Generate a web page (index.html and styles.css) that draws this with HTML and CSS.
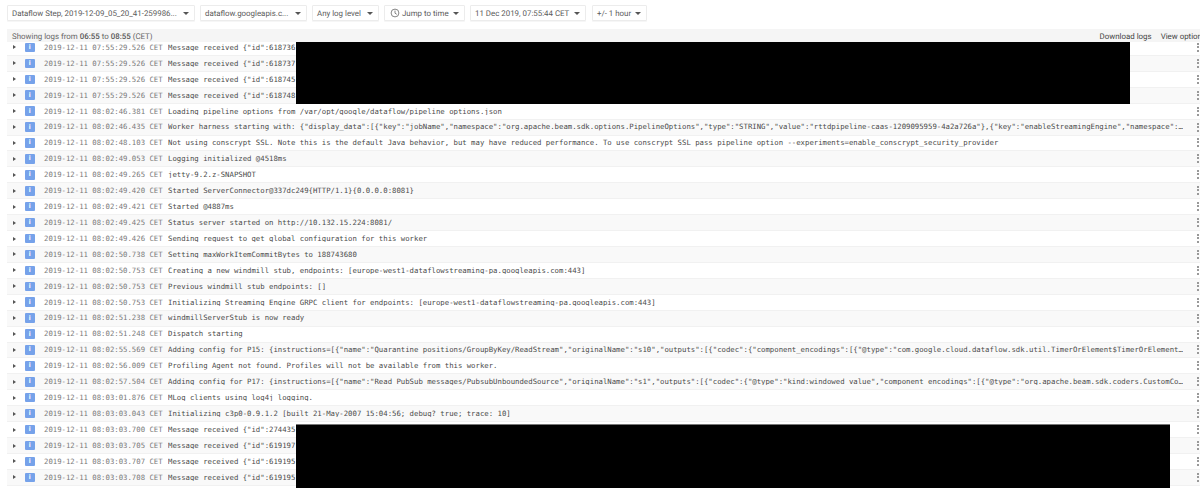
FILE: index.html
```html
<!DOCTYPE html>
<html lang="en">
<head>
<meta charset="utf-8">
<title>Dataflow logs</title>
<link rel="stylesheet" href="styles.css">
</head>
<body>
<div class="page">
  <div class="toolbar">
    <button class="drop w1"><span>Dataflow Step, 2019-12-09_05_20_41-259986...</span><i class="caret"></i></button>
    <button class="drop w2"><span>dataflow.googleapis.c...</span><i class="caret"></i></button>
    <button class="drop w3"><span>Any log level</span><i class="caret"></i></button>
    <button class="drop w4"><svg class="clock" viewBox="0 0 10 10"><circle cx="5" cy="5" r="3.9"/><path d="M5 2.6V5.2L6.8 6.3"/></svg><span>Jump to time</span><i class="caret"></i></button>
    <button class="drop w5"><span>11 Dec 2019, 07:55:44 CET</span><i class="caret"></i></button>
    <button class="drop w6"><span>+/- 1 hour</span><i class="caret"></i></button>
  </div>
  <div class="status">
    <span>Showing logs from <b>06:55</b> to <b>08:55</b> (CET)</span>
    <span class="actions"><span>Download logs</span><span>View options</span></span>
  </div>
  <div class="rows">
    <div class="row"><i class="arrow"></i><span class="badge">i</span><span class="ts">2019-12-11 07:55:29.526 CET</span><span class="msg">Message received {"id":618736</span><i class="kebab"></i></div>
    <div class="row"><i class="arrow"></i><span class="badge">i</span><span class="ts">2019-12-11 07:55:29.526 CET</span><span class="msg">Message received {"id":618737</span><i class="kebab"></i></div>
    <div class="row"><i class="arrow"></i><span class="badge">i</span><span class="ts">2019-12-11 07:55:29.526 CET</span><span class="msg">Message received {"id":618745</span><i class="kebab"></i></div>
    <div class="row"><i class="arrow"></i><span class="badge">i</span><span class="ts">2019-12-11 07:55:29.526 CET</span><span class="msg">Message received {"id":618748</span><i class="kebab"></i></div>
    <div class="row"><i class="arrow"></i><span class="badge">i</span><span class="ts">2019-12-11 08:02:46.381 CET</span><span class="msg">Loading pipeline options from /var/opt/google/dataflow/pipeline_options.json</span><i class="kebab"></i></div>
    <div class="row"><i class="arrow"></i><span class="badge">i</span><span class="ts">2019-12-11 08:02:46.435 CET</span><span class="msg">Worker harness starting with: {"display_data":[{"key":"jobName","namespace":"org.apache.beam.sdk.options.PipelineOptions","type":"STRING","value":"rttdpipeline-caas-1209095959-4a2a726a"},{"key":"enableStreamingEngine","namespace":"org.apache.beam.sdk</span><i class="kebab"></i></div>
    <div class="row"><i class="arrow"></i><span class="badge">i</span><span class="ts">2019-12-11 08:02:48.103 CET</span><span class="msg">Not using conscrypt SSL. Note this is the default Java behavior, but may have reduced performance. To use conscrypt SSL pass pipeline option --experiments=enable_conscrypt_security_provider</span><i class="kebab"></i></div>
    <div class="row"><i class="arrow"></i><span class="badge">i</span><span class="ts">2019-12-11 08:02:49.053 CET</span><span class="msg">Logging initialized @4518ms</span><i class="kebab"></i></div>
    <div class="row"><i class="arrow"></i><span class="badge">i</span><span class="ts">2019-12-11 08:02:49.265 CET</span><span class="msg">jetty-9.2.z-SNAPSHOT</span><i class="kebab"></i></div>
    <div class="row"><i class="arrow"></i><span class="badge">i</span><span class="ts">2019-12-11 08:02:49.420 CET</span><span class="msg">Started ServerConnector@337dc249{HTTP/1.1}{0.0.0.0:8081}</span><i class="kebab"></i></div>
    <div class="row"><i class="arrow"></i><span class="badge">i</span><span class="ts">2019-12-11 08:02:49.421 CET</span><span class="msg">Started @4887ms</span><i class="kebab"></i></div>
    <div class="row"><i class="arrow"></i><span class="badge">i</span><span class="ts">2019-12-11 08:02:49.425 CET</span><span class="msg">Status server started on http://10.132.15.224:8081/</span><i class="kebab"></i></div>
    <div class="row"><i class="arrow"></i><span class="badge">i</span><span class="ts">2019-12-11 08:02:49.426 CET</span><span class="msg">Sending request to get global configuration for this worker</span><i class="kebab"></i></div>
    <div class="row"><i class="arrow"></i><span class="badge">i</span><span class="ts">2019-12-11 08:02:50.738 CET</span><span class="msg">Setting maxWorkItemCommitBytes to 188743680</span><i class="kebab"></i></div>
    <div class="row"><i class="arrow"></i><span class="badge">i</span><span class="ts">2019-12-11 08:02:50.753 CET</span><span class="msg">Creating a new windmill stub, endpoints: [europe-west1-dataflowstreaming-pa.googleapis.com:443]</span><i class="kebab"></i></div>
    <div class="row"><i class="arrow"></i><span class="badge">i</span><span class="ts">2019-12-11 08:02:50.753 CET</span><span class="msg">Previous windmill stub endpoints: []</span><i class="kebab"></i></div>
    <div class="row"><i class="arrow"></i><span class="badge">i</span><span class="ts">2019-12-11 08:02:50.753 CET</span><span class="msg">Initializing Streaming Engine GRPC client for endpoints: [europe-west1-dataflowstreaming-pa.googleapis.com:443]</span><i class="kebab"></i></div>
    <div class="row"><i class="arrow"></i><span class="badge">i</span><span class="ts">2019-12-11 08:02:51.238 CET</span><span class="msg">windmillServerStub is now ready</span><i class="kebab"></i></div>
    <div class="row"><i class="arrow"></i><span class="badge">i</span><span class="ts">2019-12-11 08:02:51.248 CET</span><span class="msg">Dispatch starting</span><i class="kebab"></i></div>
    <div class="row"><i class="arrow"></i><span class="badge">i</span><span class="ts">2019-12-11 08:02:55.569 CET</span><span class="msg">Adding config for P15: {instructions=[{"name":"Quarantine positions/GroupByKey/ReadStream","originalName":"s10","outputs":[{"codec":{"component_encodings":[{"@type":"com.google.cloud.dataflow.sdk.util.TimerOrElement$TimerOrElementCoder","component</span><i class="kebab"></i></div>
    <div class="row"><i class="arrow"></i><span class="badge">i</span><span class="ts">2019-12-11 08:02:56.009 CET</span><span class="msg">Profiling Agent not found. Profiles will not be available from this worker.</span><i class="kebab"></i></div>
    <div class="row"><i class="arrow"></i><span class="badge">i</span><span class="ts">2019-12-11 08:02:57.504 CET</span><span class="msg">Adding config for P17: {instructions=[{"name":"Read PubSub messages/PubsubUnboundedSource","originalName":"s1","outputs":[{"codec":{"@type":"kind:windowed_value","component_encodings":[{"@type":"org.apache.beam.sdk.coders.CustomCoder","component</span><i class="kebab"></i></div>
    <div class="row"><i class="arrow"></i><span class="badge">i</span><span class="ts">2019-12-11 08:03:01.876 CET</span><span class="msg">MLog clients using log4j logging.</span><i class="kebab"></i></div>
    <div class="row"><i class="arrow"></i><span class="badge">i</span><span class="ts">2019-12-11 08:03:03.043 CET</span><span class="msg">Initializing c3p0-0.9.1.2 [built 21-May-2007 15:04:56; debug? true; trace: 10]</span><i class="kebab"></i></div>
    <div class="row"><i class="arrow"></i><span class="badge">i</span><span class="ts">2019-12-11 08:03:03.700 CET</span><span class="msg">Message received {"id":274435</span><i class="kebab"></i></div>
    <div class="row"><i class="arrow"></i><span class="badge">i</span><span class="ts">2019-12-11 08:03:03.705 CET</span><span class="msg">Message received {"id":619197</span><i class="kebab"></i></div>
    <div class="row"><i class="arrow"></i><span class="badge">i</span><span class="ts">2019-12-11 08:03:03.707 CET</span><span class="msg">Message received {"id":619195</span><i class="kebab"></i></div>
    <div class="row"><i class="arrow"></i><span class="badge">i</span><span class="ts">2019-12-11 08:03:03.708 CET</span><span class="msg">Message received {"id":619195</span><i class="kebab"></i></div>
  </div>
  <div class="redact redact-top"></div>
  <div class="redact redact-bottom"></div>
</div>
</body>
</html>
```
FILE: styles.css
```css
* { box-sizing: border-box; }
html, body { margin: 0; padding: 0; background: #fff; }
.page { position: relative; width: 1200px; height: 488px; overflow: hidden; font-family: Roboto, "Liberation Sans", sans-serif; text-rendering: geometricPrecision; }

.toolbar { display: flex; gap: 5px; height: 29px; padding: 5px 0 0 7px; align-items: flex-start; }
.drop { display: flex; align-items: center; height: 16px; margin: 0; padding: 0 5px 0 4px; border: 1px solid #ececec; border-radius: 1px; background: #fff; color: #5a5a5a; font: 400 7.9px Roboto, sans-serif; text-rendering: geometricPrecision; white-space: nowrap; box-shadow: 0 1px 0 #f6f6f6; }
.w1 { width: 188px; }
.w2 { width: 107px; }
.w3 { width: 67px; }
.w4 { width: 81px; }
.w5 { width: 116px; margin-right: 1px; }
.w6 { width: 55px; }
.caret { flex: none; width: 0; height: 0; margin-left: auto; border-left: 3px solid transparent; border-right: 3px solid transparent; border-top: 3px solid #555; }
.clock { flex: none; width: 10px; height: 10px; margin: 0 2px 0 1px; fill: none; stroke: #666; stroke-width: .8; }

.status { position: relative; z-index: 1; display: flex; justify-content: space-between; align-items: center; height: 13px; margin: 0 0 -2px 7px; padding: 2px 0 0 5px; background: #f5f5f5; color: #666; font-size: 7.9px; white-space: nowrap; }
.status b { font-weight: 500; color: #555; }
.actions { display: flex; gap: 9px; margin-right: -6px; color: #444; font-weight: 400; }

.row { display: flex; align-items: center; height: 15.93px; margin-left: 7px; padding-left: 6px; border-bottom: 1px solid #f1f1f1; }
.row:nth-child(even) { background: #f9f9f9; }
.arrow { flex: none; width: 0; height: 0; border-top: 2.5px solid transparent; border-bottom: 2.5px solid transparent; border-left: 3px solid #555; }
.badge { flex: none; display: flex; align-items: center; justify-content: center; width: 9.5px; height: 9.5px; margin-left: 9px; border-radius: 1px; background: #76a2ea; color: #fff; font: 700 7px "Liberation Sans", sans-serif; }
.ts, .msg { font: 400 7.3px/1 "DejaVu Sans Mono", monospace; white-space: pre; }
.ts { flex: none; width: 124px; margin-left: 9.5px; color: #7a7a7a; }
.msg { flex: none; width: 1015px; overflow: hidden; text-overflow: ellipsis; color: #4a4a4a; }
.kebab { flex: none; width: 2px; height: 9px; margin-left: 14px; border-left: 2px dotted #999; }

.redact { position: absolute; left: 296px; background: #000; }
.redact-top { top: 42px; width: 834px; height: 62px; }
.redact-bottom { top: 424px; width: 874px; height: 64px; border-top: 1px solid #777; }
```
